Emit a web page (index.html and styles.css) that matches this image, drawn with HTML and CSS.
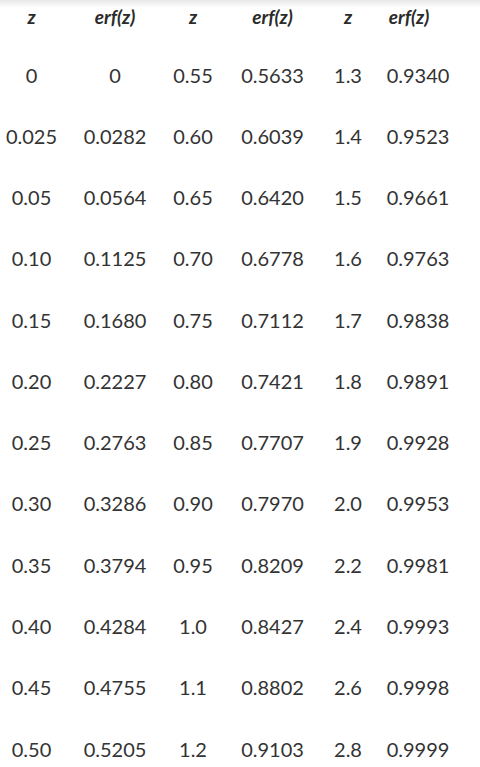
FILE: index.html
```html
<!DOCTYPE html>
<html>
<head>
<meta charset="utf-8">
<link rel="stylesheet" href="styles.css">
</head>
<body>
<div class="shade"></div>
<div class="table">
  <div class="row head">
    <div class="cell">z</div><div class="cell">erf(z)</div>
    <div class="cell">z</div><div class="cell">erf(z)</div>
    <div class="cell">z</div><div class="cell last">erf(z)</div>
  </div>
  <div class="row"><div class="cell">0</div><div class="cell">0</div><div class="cell">0.55</div><div class="cell">0.5633</div><div class="cell">1.3</div><div class="cell">0.9340</div></div>
  <div class="row"><div class="cell">0.025</div><div class="cell">0.0282</div><div class="cell">0.60</div><div class="cell">0.6039</div><div class="cell">1.4</div><div class="cell">0.9523</div></div>
  <div class="row"><div class="cell">0.05</div><div class="cell">0.0564</div><div class="cell">0.65</div><div class="cell">0.6420</div><div class="cell">1.5</div><div class="cell">0.9661</div></div>
  <div class="row"><div class="cell">0.10</div><div class="cell">0.1125</div><div class="cell">0.70</div><div class="cell">0.6778</div><div class="cell">1.6</div><div class="cell">0.9763</div></div>
  <div class="row"><div class="cell">0.15</div><div class="cell">0.1680</div><div class="cell">0.75</div><div class="cell">0.7112</div><div class="cell">1.7</div><div class="cell">0.9838</div></div>
  <div class="row"><div class="cell">0.20</div><div class="cell">0.2227</div><div class="cell">0.80</div><div class="cell">0.7421</div><div class="cell">1.8</div><div class="cell">0.9891</div></div>
  <div class="row"><div class="cell">0.25</div><div class="cell">0.2763</div><div class="cell">0.85</div><div class="cell">0.7707</div><div class="cell">1.9</div><div class="cell">0.9928</div></div>
  <div class="row"><div class="cell">0.30</div><div class="cell">0.3286</div><div class="cell">0.90</div><div class="cell">0.7970</div><div class="cell">2.0</div><div class="cell">0.9953</div></div>
  <div class="row"><div class="cell">0.35</div><div class="cell">0.3794</div><div class="cell">0.95</div><div class="cell">0.8209</div><div class="cell">2.2</div><div class="cell">0.9981</div></div>
  <div class="row"><div class="cell">0.40</div><div class="cell">0.4284</div><div class="cell">1.0</div><div class="cell">0.8427</div><div class="cell">2.4</div><div class="cell">0.9993</div></div>
  <div class="row"><div class="cell">0.45</div><div class="cell">0.4755</div><div class="cell">1.1</div><div class="cell">0.8802</div><div class="cell">2.6</div><div class="cell">0.9998</div></div>
  <div class="row"><div class="cell">0.50</div><div class="cell">0.5205</div><div class="cell">1.2</div><div class="cell">0.9103</div><div class="cell">2.8</div><div class="cell">0.9999</div></div>
</div>
</body>
</html>
```
FILE: styles.css
```css
html, body {
  margin: 0;
  padding: 0;
  background: #fff;
}
body {
  font-family: Lato, "Open Sans", sans-serif;
  color: #333;
  position: relative;
  overflow: hidden;
}
.shade {
  position: absolute;
  top: 0;
  left: 0;
  right: 0;
  height: 8px;
  background: linear-gradient(to bottom, rgba(0,0,0,0.09), rgba(0,0,0,0));
}
.table {
  display: flex;
  flex-direction: column;
}
.row {
  display: grid;
  grid-template-columns: 63px 104px 52px 107px 44px 96px;
  height: 61.27px;
  align-items: center;
  font-size: 20px;
  line-height: 24px;
}
.row.head {
  height: 44px;
  align-items: start;
  padding-top: 5px;
  box-sizing: border-box;
  font-weight: 700;
  font-style: italic;
  font-size: 19px;
  color: #2b2b2b;
}
.cell {
  text-align: center;
  white-space: nowrap;
}
.head .last {
  padding-right: 18px;
}
```
